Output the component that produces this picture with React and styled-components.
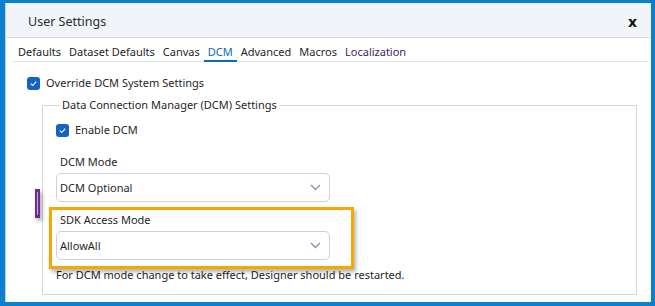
import React from "react";
import styled, { createGlobalStyle } from "styled-components";

const GlobalStyle = createGlobalStyle`
  html, body {
    margin: 0;
    padding: 0;
    background: #0b80cf;
    width: 655px;
    height: 306px;
    overflow: hidden;
  }
  body {
    font-family: "Segoe UI", "Noto Sans", "Liberation Sans", sans-serif;
    color: #1f1f1f;
    font-size: 11px;
    line-height: 16px;
  }
`;

const Frame = styled.div`
  padding: 3px 4px 4px 5px;
  height: 306px;
  box-sizing: border-box;
`;

const Window = styled.div`
  background: #fff;
  height: 100%;
  border-left: 1px solid #c9ced6;
  box-sizing: border-box;
  display: flex;
  flex-direction: column;
  position: relative;
`;

const TitleBar = styled.div`
  height: 35px;
  box-sizing: border-box;
  background: #f1f4f9;
  border-bottom: 1px solid #d9dde3;
  display: flex;
  align-items: center;
  justify-content: space-between;
  padding: 3px 14px 0 22px;
  flex-shrink: 0;
`;

const Title = styled.span`
  font-size: 12.5px;
  color: #2b2b2b;
`;

const Close = styled.span`
  font-family: "DejaVu Sans", sans-serif;
  font-weight: bold;
  font-size: 14px;
  color: #111;
`;

const Tabs = styled.div`
  display: flex;
  margin: 0 3px 0 7px;
  padding-left: 1px;
  border-bottom: 1px solid #dfe2e6;
  height: 24px;
  box-sizing: border-box;
  align-items: flex-end;
  flex-shrink: 0;
`;

const Tab = styled.div`
  padding: 0 4px 1px;
  line-height: 14px;
  color: ${(p) => (p.$active ? "#0b6bc0" : p.$visited ? "#4b1a63" : "#1f1f1f")};
  border-bottom: 2px solid ${(p) => (p.$active ? "#0b6bc0" : "transparent")};
  margin-bottom: -1px;
`;

const Body = styled.div`
  padding: 13px 14px 0 21px;
  flex: 1;
  display: flex;
  flex-direction: column;
`;

const CheckRow = styled.label`
  display: flex;
  align-items: center;
  gap: 6px;
  height: 16px;
`;

const Box = styled.span`
  width: 13px;
  height: 13px;
  border-radius: 3px;
  background: #1463be;
  display: inline-flex;
  align-items: center;
  justify-content: center;
`;

const Group = styled.fieldset`
  margin: 6px 0 9px 15px;
  padding: 9px 14px 11px 13px;
  border: 1px solid #d7d7d7;
  flex: 1;
  display: flex;
  flex-direction: column;
`;

const Legend = styled.legend`
  padding: 0 2px;
  margin-left: 4px;
`;

const FieldLabel = styled.div`
  margin: 0 0 3px 4px;
`;

const Select = styled.div`
  width: 274px;
  height: 29px;
  box-sizing: border-box;
  border: 1px solid #c9d1e3;
  border-radius: 5px;
  display: flex;
  align-items: center;
  justify-content: space-between;
  padding: 0 8px 0 3px;
  background: #fff;
`;

const Field = styled.div`
  position: relative;
  margin-top: ${(p) => p.$top || 0}px;
`;

const Highlight = styled.div`
  position: absolute;
  left: -7px;
  top: -5px;
  width: 305px;
  height: 62px;
  box-sizing: border-box;
  border: 3px solid #f5a900;
  box-shadow: 2px 3px 4px rgba(0, 0, 0, 0.3);
  pointer-events: none;
`;

const Note = styled.div`
  margin-top: 7px;
`;

const Marker = styled.div`
  position: absolute;
  left: 29px;
  top: 186px;
  width: 5px;
  height: 29px;
  background: #6b2b90;
  box-shadow: 2px 3px 4px rgba(0, 0, 0, 0.35);
  &::after {
    content: "";
    position: absolute;
    left: 2px;
    top: 3px;
    width: 1px;
    height: 23px;
    background: #c9a8dc;
  }
`;

function Check() {
  return (
    <Box>
      <svg width="9" height="9" viewBox="0 0 10 10">
        <path d="M2 5.2 L4.2 7.3 L8 3" fill="none" stroke="#fff" strokeWidth="1.2" />
      </svg>
    </Box>
  );
}

function Chevron() {
  return (
    <svg width="11" height="7" viewBox="0 0 11 7">
      <path d="M1 1 L5.5 5.5 L10 1" fill="none" stroke="#8593ab" strokeWidth="1.4" />
    </svg>
  );
}

const tabs = ["Defaults", "Dataset Defaults", "Canvas", "DCM", "Advanced", "Macros", "Localization"];

export default function App() {
  return (
    <Frame>
      <GlobalStyle />
      <Window>
        <TitleBar>
          <Title>User Settings</Title>
          <Close>x</Close>
        </TitleBar>
        <Tabs>
          {tabs.map((t) => (
            <Tab key={t} $active={t === "DCM"} $visited={t === "Localization"}>
              {t}
            </Tab>
          ))}
        </Tabs>
        <Body>
          <CheckRow>
            <Check />
            Override DCM System Settings
          </CheckRow>
          <Group>
            <Legend>Data Connection Manager (DCM) Settings</Legend>
            <CheckRow>
              <Check />
              Enable DCM
            </CheckRow>
            <Field $top={16}>
              <FieldLabel>DCM Mode</FieldLabel>
              <Select>
                DCM Optional
                <Chevron />
              </Select>
            </Field>
            <Field $top={10}>
              <FieldLabel>SDK Access Mode</FieldLabel>
              <Select>
                AllowAll
                <Chevron />
              </Select>
              <Highlight />
            </Field>
            <Note>For DCM mode change to take effect, Designer should be restarted.</Note>
          </Group>
        </Body>
        <Marker />
      </Window>
    </Frame>
  );
}
